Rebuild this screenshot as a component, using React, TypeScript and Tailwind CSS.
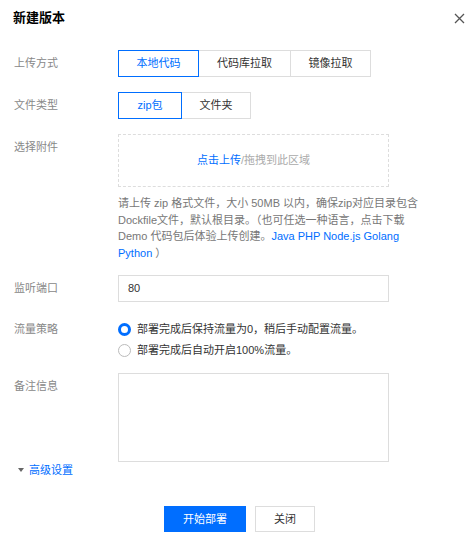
import React from 'react';

const font = { fontFamily: '"Liberation Sans", "Noto Sans CJK SC", sans-serif' };

const Label = ({ children }: { children: React.ReactNode }) => (
  <div className="w-[104px] shrink-0 text-[11px] leading-[27px] text-[#888]">{children}</div>
);

const Segment = ({ items, widths, active }: { items: string[]; widths: string[]; active: number }) => (
  <div className="flex h-[27px]">
    {items.map((it, i) => (
      <div
        key={it}
        className={
          'flex items-center justify-center text-[11px] border -ml-px first:ml-0 ' +
          widths[i] +
          (i === active ? ' border-[#006eff] text-[#006eff] relative z-10' : ' border-[#ddd] text-[#333]')
        }
      >
        {it}
      </div>
    ))}
  </div>
);

export default function App() {
  return (
    <div className="w-[474px] h-[541px] bg-white overflow-hidden" style={font}>
      <div className="flex items-center justify-between pl-[13px] pr-[9px] pt-[10px] h-[26px]">
        <h2 className="text-[13px] font-bold leading-[16px] text-black">新建版本</h2>
        <svg width="11" height="11" viewBox="0 0 11 11" className="text-[#555]">
          <path d="M1 1 L10 10 M10 1 L1 10" stroke="currentColor" strokeWidth="1.3" />
        </svg>
      </div>

      <div className="pl-[14px]">
        <div className="flex mt-[24px]">
          <Label>上传方式</Label>
          <Segment items={['本地代码', '代码库拉取', '镜像拉取']} widths={['w-[81px]', 'w-[93px]', 'w-[81px]']} active={0} />
        </div>

        <div className="flex mt-[15px]">
          <Label>文件类型</Label>
          <Segment items={['zip包', '文件夹']} widths={['w-[64px]', 'w-[70px]']} active={0} />
        </div>

        <div className="flex mt-[15px]">
          <Label>选择附件</Label>
          <div>
            <div className="w-[271px] h-[53px] border border-dashed border-[#ddd] flex items-center justify-center text-[11px]">
              <span className="text-[#006eff]">点击上传</span>
              <span className="text-[#aaa]">/拖拽到此区域</span>
            </div>
            <div className="mt-[8px] text-[11px] leading-[16.5px] text-[#777] whitespace-nowrap">
              <div>请上传 zip 格式文件，大小 50MB 以内，确保zip对应目录包含</div>
              <div>Dockfile文件，默认根目录。（也可任选一种语言，点击下载</div>
              <div>
                Demo 代码包后体验上传创建。
                <span className="text-[#006eff]">Java PHP Node.js Golang</span>
              </div>
              <div>
                <span className="text-[#006eff]">Python</span> ）
              </div>
            </div>
          </div>
        </div>

        <div className="flex mt-[14px]">
          <Label>监听端口</Label>
          <div className="w-[271px] h-[27px] border border-[#ddd] flex items-center pl-[9px] text-[11px] text-[#333]">
            80
          </div>
        </div>

        <div className="flex mt-[17px]">
          <div className="w-[104px] shrink-0 text-[11px] leading-[21px] text-[#888]">流量策略</div>
          <div className="text-[11px] text-[#333]">
            <div className="flex items-center h-[21px] gap-[6px]">
              <span className="w-[13px] h-[13px] rounded-full border-[3px] border-[#006eff] bg-white" />
              部署完成后保持流量为0，稍后手动配置流量。
            </div>
            <div className="flex items-center h-[21px] gap-[6px]">
              <span className="w-[13px] h-[13px] rounded-full border border-[#bbb] bg-white" />
              部署完成后自动开启100%流量。
            </div>
          </div>
        </div>

        <div className="flex mt-[12px]">
          <Label>备注信息</Label>
          <div className="w-[271px] h-[89px] border border-[#ddd]" />
        </div>
      </div>

      <div className="flex items-center pl-[18px] h-[16px] gap-[5px] text-[11px] text-[#006eff]">
        <span className="w-0 h-0 border-l-[3.5px] border-r-[3.5px] border-t-[4px] border-l-transparent border-r-transparent border-t-[#666]" />
        高级设置
      </div>

      <div className="flex justify-center gap-[9px] pl-[5px] mt-[28px]">
        <button className="w-[82px] h-[26px] bg-[#006eff] text-white text-[11px]">开始部署</button>
        <button className="w-[60px] h-[26px] border border-[#ddd] text-[#333] text-[11px] bg-white">关闭</button>
      </div>
    </div>
  );
}
